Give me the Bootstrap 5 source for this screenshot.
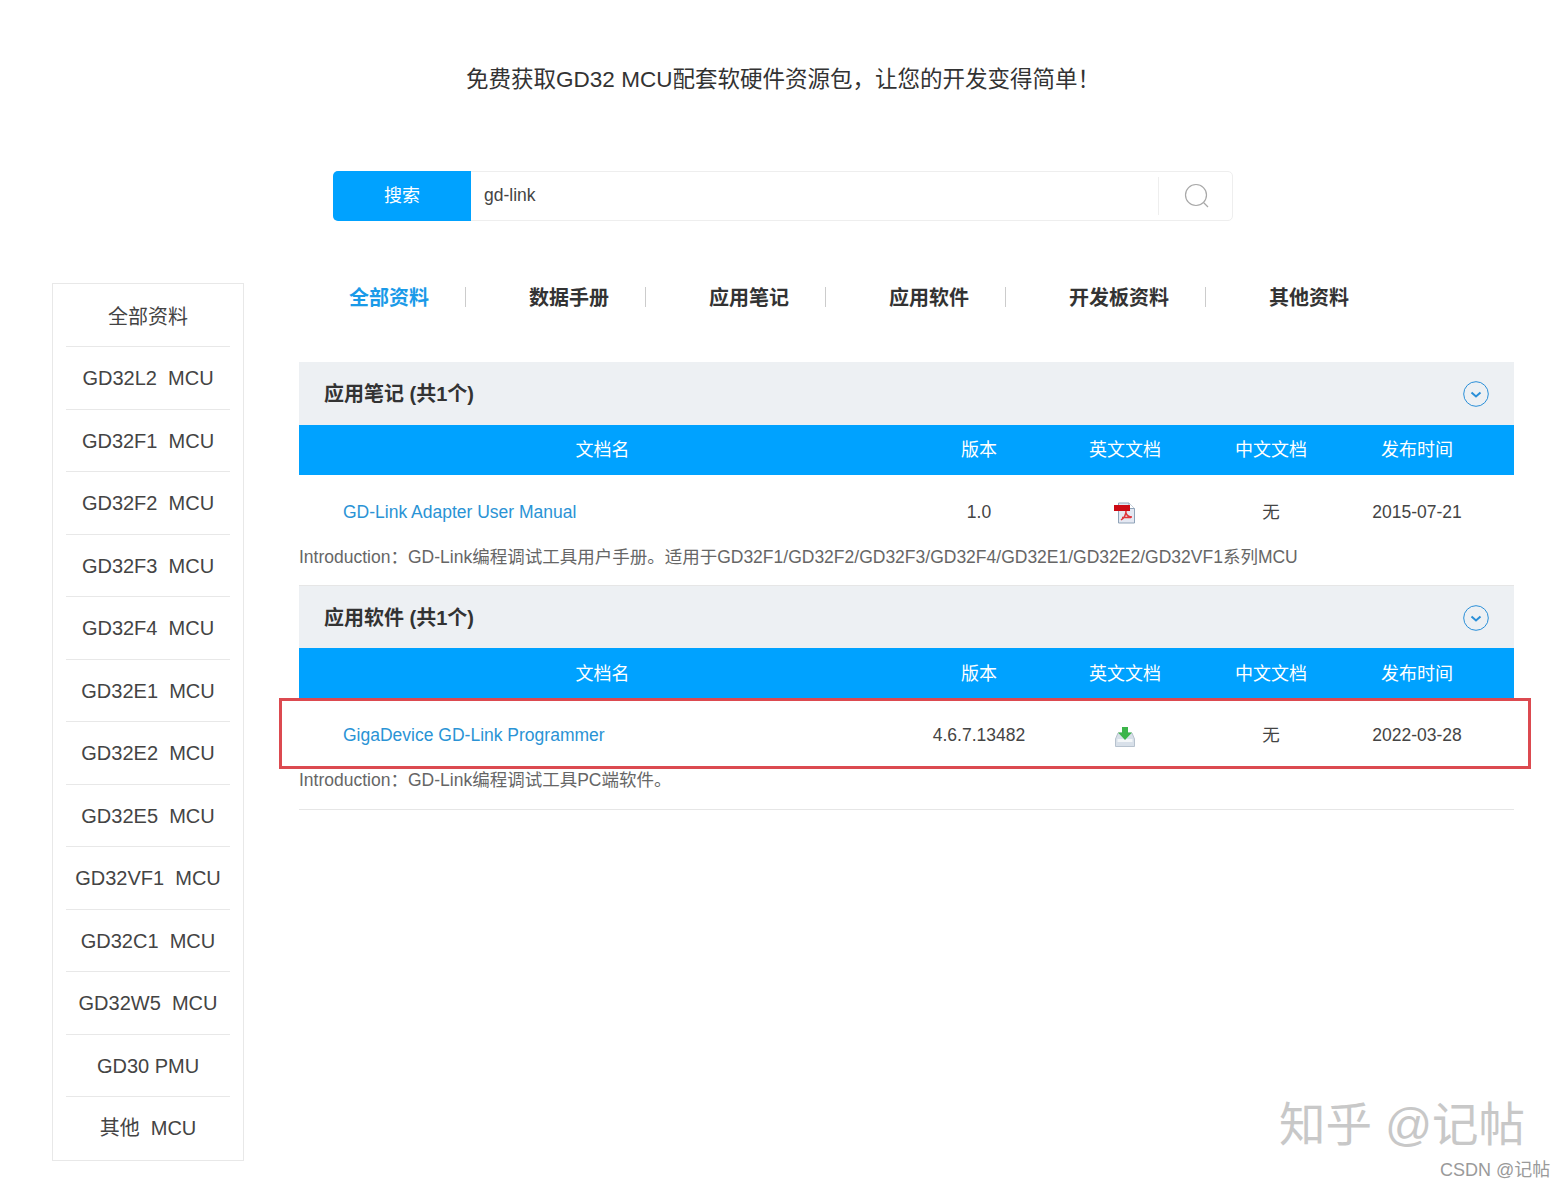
<!DOCTYPE html>
<html lang="zh-CN">
<head>
<meta charset="utf-8">
<title>GD32 MCU 资料下载</title>
<link rel="stylesheet" href="https://cdn.jsdelivr.net/npm/bootstrap@5.3.0/dist/css/bootstrap.min.css">
<style>
html,body{height:100%;}
body{font-family:"Liberation Sans","Noto Sans CJK SC",sans-serif;color:#333;background:#fff;position:relative;height:1189px;overflow:hidden;font-size:17.5px;}
.hero-title{font-size:22.5px;line-height:34px;padding-top:63px;height:171px;color:#333;text-align:center;margin:0;font-weight:400;}
.search-box{width:900px;height:50px;margin:0 auto 62px;border:1px solid #eee;border-radius:5px;}
.search-btn{width:138px;margin:-1px 0 -1px -1px;background:#00a2ff;color:#fff;font-size:18px;border-radius:5px 0 0 5px;}
.search-val{padding-left:13px;font-size:17.5px;color:#444;padding-bottom:2px;}
.search-ico{width:74px;border-left:1px solid #eee;margin:5px 0;padding-left:2px;}
.page-cols{padding-left:52px;}
.side-nav{width:192px;height:878px;border:1px solid #e8e8e8;flex:none;padding:.5px 13px 0;}
.side-item{height:62.5px;border-bottom:1px solid #e8e8e8;font-size:20px;color:#444;text-align:center;line-height:63px;white-space:pre;}
.side-item:first-child{line-height:65px;}
.side-item:last-child{border-bottom:0;}
.main-col{width:1215px;margin-left:55px;position:relative;}
.tab-strip{padding-left:50px;height:79px;align-items:flex-start;padding-top:4px;}
.tab-entry{font-size:20px;font-weight:700;color:#333;line-height:22px;padding-right:36px;margin-right:63px;border-right:1px solid #ccc;height:20px;}
.tab-entry.is-on{color:#1a9ae8;}
.tab-entry:last-child{border:0;}
.sec-head{height:62.5px;background:#edf0f3;padding:2px 25px 0;font-size:20px;font-weight:700;color:#333;}
.doc-grid{table-layout:fixed;width:1215px;margin:0;}
.doc-grid th{background:#00a2ff;color:#fff;font-size:18px;font-weight:400;height:50px;padding:2px 0 0;text-align:center;vertical-align:middle;border:0;}
.doc-grid td{height:73px;padding:2px 0 0;text-align:center;vertical-align:middle;font-size:17.5px;color:#444;border:0;}
.doc-grid td.name-cell{text-align:left;padding-left:44px;}
.doc-link{color:#2a93d5;text-decoration:none;}
.intro-line{height:38px;line-height:18px;font-size:17.5px;color:#666;border-bottom:1px solid #e6e6e6;white-space:nowrap;}
.intro-tall{height:39px;}
.mark-box{position:absolute;left:-20px;top:415px;width:1252px;height:71px;border:3px solid #dc4a50;}
.wm-big{position:absolute;left:1279px;top:1095px;font-size:46.5px;line-height:60px;color:#c8c8c8;white-space:nowrap;}
.wm-small{position:absolute;left:1440px;top:1158px;font-size:18px;line-height:24px;color:#9a9a9a;white-space:nowrap;}
.doc-ico{vertical-align:-6px;}
.dl-ico{vertical-align:-7px;}
</style>
</head>
<body>
<h1 class="hero-title">免费获取GD32 MCU配套软硬件资源包，让您的开发变得简单！</h1>

<div class="search-box d-flex">
  <div class="search-btn d-flex align-items-center justify-content-center">搜索</div>
  <div class="search-val flex-grow-1 d-flex align-items-center">gd-link</div>
  <div class="search-ico d-flex align-items-center justify-content-center">
    <svg width="26" height="26" viewBox="0 0 26 26" fill="none" stroke="#a8a8a8" stroke-width="1.2"><circle cx="12" cy="12" r="10.5"/><path d="M19.500 19.500L24 24"/></svg>
  </div>
</div>

<div class="page-cols d-flex align-items-start">
  <div class="side-nav">
    <div class="side-item">全部资料</div>
    <div class="side-item">GD32L2  MCU</div>
    <div class="side-item">GD32F1  MCU</div>
    <div class="side-item">GD32F2  MCU</div>
    <div class="side-item">GD32F3  MCU</div>
    <div class="side-item">GD32F4  MCU</div>
    <div class="side-item">GD32E1  MCU</div>
    <div class="side-item">GD32E2  MCU</div>
    <div class="side-item">GD32E5  MCU</div>
    <div class="side-item">GD32VF1  MCU</div>
    <div class="side-item">GD32C1  MCU</div>
    <div class="side-item">GD32W5  MCU</div>
    <div class="side-item">GD30 PMU</div>
    <div class="side-item">其他  MCU</div>
  </div>

  <div class="main-col">
    <div class="tab-strip d-flex">
      <div class="tab-entry is-on">全部资料</div>
      <div class="tab-entry">数据手册</div>
      <div class="tab-entry">应用笔记</div>
      <div class="tab-entry">应用软件</div>
      <div class="tab-entry">开发板资料</div>
      <div class="tab-entry">其他资料</div>
    </div>

    <div class="sec-head d-flex align-items-center justify-content-between">
      <span>应用笔记 (共1个)</span>
      <svg width="26" height="26" viewBox="0 0 26 26" fill="none" stroke="#2a8fd8"><circle cx="13" cy="13" r="12.300"/><path d="M8.500 11.500L13 15.500L17.500 11.500" stroke-width="2"/></svg>
    </div>
    <table class="doc-grid">
      <colgroup><col style="width:607px"><col style="width:146px"><col style="width:146px"><col style="width:146px"><col style="width:146px"><col></colgroup>
      <thead><tr><th>文档名</th><th>版本</th><th>英文文档</th><th>中文文档</th><th>发布时间</th><th></th></tr></thead>
      <tbody><tr>
        <td class="name-cell"><a class="doc-link" href="#">GD-Link Adapter User Manual</a></td>
        <td>1.0</td>
        <td><svg class="doc-ico" width="22" height="22" viewBox="0 0 22 22"><path d="M4.500 1H15L20.500 6.500V21H4.500Z" fill="#e4e8f2" stroke="#8fa3b8"/><path d="M15 1V6.500H20.500" fill="#fff" stroke="#8fa3b8"/><rect x="0" y="3" width="16" height="6" fill="#cc0a14"/><path d="M12 9C12 13 10 16 7 18M12 11C13 14 15 15 18 15M8 15.500H17" fill="none" stroke="#e0353b" stroke-width="1.500"/></svg></td>
        <td>无</td>
        <td>2015-07-21</td>
        <td></td>
      </tr></tbody>
    </table>
    <div class="intro-line">Introduction：GD-Link编程调试工具用户手册。适用于GD32F1/GD32F2/GD32F3/GD32F4/GD32E1/GD32E2/GD32VF1系列MCU</div>

    <div class="sec-head d-flex align-items-center justify-content-between">
      <span>应用软件 (共1个)</span>
      <svg width="26" height="26" viewBox="0 0 26 26" fill="none" stroke="#2a8fd8"><circle cx="13" cy="13" r="12.300"/><path d="M8.500 11.500L13 15.500L17.500 11.500" stroke-width="2"/></svg>
    </div>
    <table class="doc-grid">
      <colgroup><col style="width:607px"><col style="width:146px"><col style="width:146px"><col style="width:146px"><col style="width:146px"><col></colgroup>
      <thead><tr><th>文档名</th><th>版本</th><th>英文文档</th><th>中文文档</th><th>发布时间</th><th></th></tr></thead>
      <tbody><tr>
        <td class="name-cell"><a class="doc-link" href="#">GigaDevice GD-Link Programmer</a></td>
        <td>4.6.7.13482</td>
        <td><svg class="dl-ico" width="22" height="22" viewBox="0 0 22 22"><path d="M1.500 13L4 7H18L20.500 13V20.500H1.500Z" fill="#d8e0e9" stroke="#b7c2ce"/><path d="M3.500 13H18.500V16H3.500Z" fill="#f3f6f8"/><path d="M8 1H14V6.500H18L11 14L4 6.500H8Z" fill="#3cb54a"/></svg></td>
        <td>无</td>
        <td>2022-03-28</td>
        <td></td>
      </tr></tbody>
    </table>
    <div class="intro-line intro-tall">Introduction：GD-Link编程调试工具PC端软件。</div>
    <div class="mark-box"></div>
  </div>
</div>

<div class="wm-big">知乎 @记帖</div>
<div class="wm-small">CSDN @记帖</div>

<script src="https://cdn.jsdelivr.net/npm/bootstrap@5.3.0/dist/js/bootstrap.bundle.min.js"></script>
</body>
</html>
